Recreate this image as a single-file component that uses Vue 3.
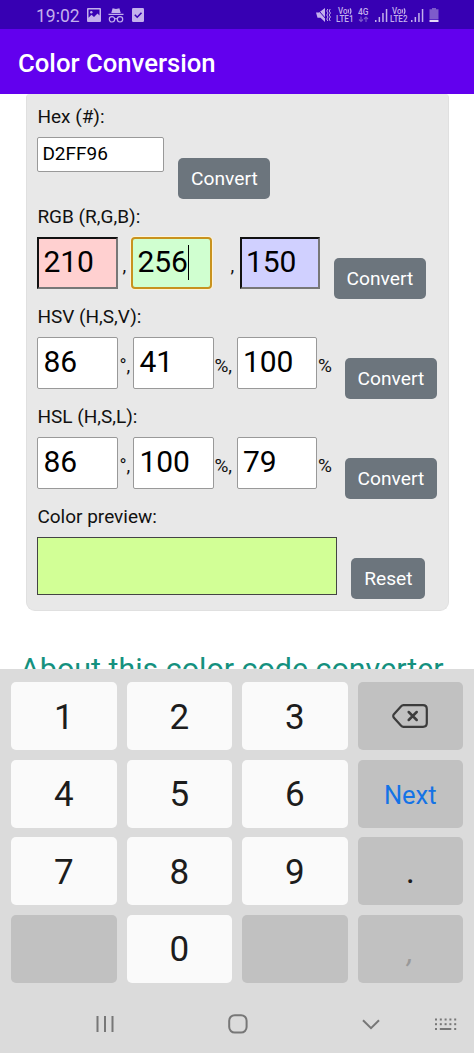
<script setup>
import { ref } from 'vue';

const hex = ref('D2FF96');

const rows = ref([
  {
    label: 'RGB (R,G,B):',
    type: 'rgb',
    fields: [
      { value: '210', after: ',', cls: 'red' },
      { value: '256', after: ',', cls: 'green', focused: true },
      { value: '150', after: '', cls: 'blue' }
    ]
  },
  {
    label: 'HSV (H,S,V):',
    type: 'hsv',
    fields: [
      { value: '86', after: '°,' },
      { value: '41', after: '%,' },
      { value: '100', after: '%', cls: 'last' }
    ]
  },
  {
    label: 'HSL (H,S,L):',
    type: 'hsl',
    fields: [
      { value: '86', after: '°,' },
      { value: '100', after: '%,' },
      { value: '79', after: '%', cls: 'last' }
    ]
  }
]);

const keys = [
  { text: '1' }, { text: '2' }, { text: '3' }, { text: '', cls: 'dark', icon: true },
  { text: '4' }, { text: '5' }, { text: '6' }, { text: 'Next', cls: 'dark next' },
  { text: '7' }, { text: '8' }, { text: '9' }, { text: '.', cls: 'dark' },
  { text: '', cls: 'dark' }, { text: '0' }, { text: '', cls: 'dark' }, { text: ',', cls: 'dark comma' }
];

const dots = [0, 4.8, 9.6, 14.4, 19.2];
</script>

<template>
  <div class="screen">
    <div class="status">
      <span class="clock">19:02</span>
      <svg class="picture" width="14" height="14" viewBox="0 0 14 14">
        <path fill-rule="evenodd" d="M1 0h12q1 0 1 1v12q0 1-1 1H1q-1 0-1-1V1q0-1 1-1zM1.5 1.5v8.300l3-3 2.500 2.300 3.500-3.600 2 2V1.500z" />
        <circle cx="4.300" cy="4.200" r="1.200" />
      </svg>
      <svg class="incognito" width="16" height="15" viewBox="0 0 16 15">
        <path d="M4.600 0.300L8 1l3.400-.7L12.700 5H3.300zM.5 5.700h15v1.400H.5z" />
        <g fill="none" stroke="#c3b0ec" stroke-width="1.200">
          <circle cx="4" cy="11.300" r="2.700" />
          <circle cx="12" cy="11.300" r="2.700" />
          <path d="M6.700 11q1.300-1 2.600 0" />
        </g>
      </svg>
      <svg class="task" width="12" height="14" viewBox="0 0 12 14">
        <rect width="12" height="14" rx="1.200" />
        <path d="M2.800 6.800l2.400 2.400 4.300-4.500" fill="none" stroke="#3700b3" stroke-width="1.600" />
      </svg>
      <div class="status-right">
        <svg class="mute" width="15" height="14" viewBox="0 0 15 14">
          <path d="M0 4.500h3L9 0v14L4.500 9.800H1.500z" />
          <path d="M.5 0L10 11" stroke="#3700b3" stroke-width="1" />
          <path d="M11.800 1l-1 2 1.200 2-1.200 2 1.200 2-1.200 2 1 2M14.200 1l-1 2 1.200 2-1.200 2 1.200 2-1.200 2 1 2" fill="none" stroke="#c3b0ec" stroke-width="1" />
        </svg>
        <svg class="volte" width="18" height="16" viewBox="0 0 18 16">
          <text x="2" y="7.300" textLength="9.500" lengthAdjust="spacingAndGlyphs">Vo</text>
          <path class="wave" d="M12 2.300q1.400 2 0 4M14 1.400q2 2.900 0 5.800" />
          <text x="0" y="15.300" textLength="17.500" lengthAdjust="spacingAndGlyphs">LTE1</text>
        </svg>
        <svg class="net" width="11" height="16" viewBox="0 0 11 16">
          <text x="0" y="7.700" textLength="10.500" lengthAdjust="spacingAndGlyphs">4G</text>
          <path class="arrows" d="M3 9.500v5M1 12.500l2 2 2-2M8 15v-5M6 12l2-2 2 2" />
        </svg>
        <svg class="signal" width="13" height="14" viewBox="0 0 13 14">
          <path d="M0 12h1.500v2H0zM3.600 9h1.500v5H3.600zM7.200 5h1.500v9H7.200zM10.800 1h1.500v13h-1.500z" />
        </svg>
        <svg class="volte second" width="18" height="16" viewBox="0 0 18 16">
          <text x="2" y="7.300" textLength="9.500" lengthAdjust="spacingAndGlyphs">Vo</text>
          <path class="wave" d="M12 2.300q1.400 2 0 4M14 1.400q2 2.900 0 5.800" />
          <text x="0" y="15.300" textLength="17.500" lengthAdjust="spacingAndGlyphs">LTE2</text>
        </svg>
        <svg class="signal" width="13" height="14" viewBox="0 0 13 14">
          <path d="M0 12h1.500v2H0zM3.600 9h1.500v5H3.600zM7.200 5h1.500v9H7.200zM10.800 1h1.500v13h-1.500z" />
        </svg>
        <svg class="battery" width="10" height="14" viewBox="0 0 10 14">
          <path d="M3 0h4v1.300h2.500V11H.5V1.300H3z" fill="#7d5bcb" />
          <path d="M.5 11.800h9V14h-9z" fill="#e4daf8" />
        </svg>
      </div>
    </div>

    <header class="toolbar">Color Conversion</header>

    <main class="content">
      <div class="panel">
        <div class="group">
          <label>Hex (#):</label>
          <div class="line">
            <div class="hex">{{ hex }}</div>
            <button class="btn">Convert</button>
          </div>
        </div>
        <div v-for="row in rows" :key="row.type" class="group" :class="row.type">
          <label>{{ row.label }}</label>
          <div class="line">
            <template v-for="(field, i) in row.fields" :key="i">
              <div class="field" :class="[field.cls, { focused: field.focused }]">
                {{ field.value }}<i v-if="field.focused" class="caret"></i>
              </div>
              <span class="after" :class="'after' + i">{{ field.after }}</span>
            </template>
            <button class="btn">Convert</button>
          </div>
        </div>
        <div class="group">
          <label>Color preview:</label>
          <div class="line">
            <div class="preview"></div>
            <button class="btn reset">Reset</button>
          </div>
        </div>
      </div>
      <h2>About this color code converter</h2>
    </main>

    <div class="keyboard">
      <div class="keys">
        <div v-for="(key, i) in keys" :key="i" class="key" :class="key.cls">
          <svg v-if="key.icon" width="36" height="24" viewBox="0 0 36 24" fill="none" stroke="#3c3c3c" stroke-width="2.200" stroke-linejoin="round" stroke-linecap="round">
            <path d="M11.500 1.200H31q3.800 0 3.800 3.800v14q0 3.800-3.800 3.800H11.500q-1.500 0-2.600-1.200l-7-7.800q-1.300-1.800 0-3.600l7-7.800q1.100-1.200 2.600-1.200z" />
            <path d="M16.700 8l8 8M24.700 8l-8 8" stroke-width="2.500" />
          </svg>
          <span v-else>{{ key.text }}</span>
        </div>
      </div>
      <div class="nav">
        <svg class="recents" width="18" height="18" viewBox="0 0 18 18">
          <path d="M1.500 1v16M9 1v16M16.500 1v16" />
        </svg>
        <svg class="home" width="20" height="20" viewBox="0 0 20 20">
          <rect x="1.200" y="1.200" width="17.400" height="17.400" rx="5.500" />
        </svg>
        <svg class="back" width="18" height="11" viewBox="0 0 18 11">
          <path d="M1 1.200l8 8 8-8" />
        </svg>
        <svg class="ime" width="22" height="13" viewBox="0 0 22 13">
          <g v-for="x in dots" :key="x">
            <rect :x="x" y="0.500" width="2" height="2" />
            <rect :x="x" y="5.200" width="2" height="2" />
          </g>
          <rect x="0" y="10" width="2" height="2" />
          <rect x="4.800" y="10" width="11.500" height="2" />
          <rect x="19.200" y="10" width="2" height="2" />
        </svg>
      </div>
    </div>
  </div>
</template>

<style>
body {
  background: #fff;
}
</style>

<style scoped>
.screen {
  width: 474px;
  height: 1053px;
  overflow: hidden;
  display: flex;
  flex-direction: column;
  font-family: Roboto, sans-serif;
  color: #111;
}

.status {
  height: 29px;
  flex: none;
  box-sizing: border-box;
  padding: 1px 35px 0 36px;
  display: flex;
  align-items: center;
  background: #3700b3;
  color: #c3b0ec;
  fill: #c3b0ec;
}

.clock {
  font-size: 17.5px;
  line-height: 28px;
  width: 51px;
  padding-top: 1px;
}

.incognito {
  margin-left: 7px;
}

.task {
  margin-left: 8px;
}

.status-right {
  margin-left: auto;
  display: flex;
  align-items: center;
}

.status-right text {
  font-size: 8.8px;
  font-weight: 500;
}

.volte {
  margin-left: 5px;
}

.volte.second {
  margin-left: 2px;
}

.wave,
.arrows {
  fill: none;
  stroke: #c3b0ec;
  stroke-width: 1.1;
}

.arrows {
  stroke: #7d5bcb;
}

.net {
  margin-left: 4px;
}

.signal {
  margin-left: 6px;
}

.second + .signal {
  margin-left: 3px;
}

.battery {
  margin-left: 5px;
}

.toolbar {
  height: 65px;
  flex: none;
  box-sizing: border-box;
  padding-left: 18px;
  background: #6200ee;
  color: #fff;
  font-size: 25.7px;
  font-weight: 500;
  line-height: 68px;
}

.content {
  height: 575px;
  flex: none;
  overflow: hidden;
  padding-left: 26px;
}

.panel {
  width: 423px;
  height: 517px;
  box-sizing: border-box;
  padding: 13px 0 0 10.400px;
  background: #e8e8e8;
  border: 1px solid #e0e0e0;
  border-top: 0;
  border-radius: 4px 4px 9px 9px;
}

.group {
  height: 100px;
}

label {
  display: block;
  height: 30px;
  font-size: 19px;
  line-height: 20px;
}

.line {
  display: flex;
  align-items: baseline;
  height: 60px;
}

.hex,
.field {
  box-sizing: border-box;
  flex: none;
  background: #fff;
  border: 1px solid #999;
  border-radius: 2px;
  color: #000;
}

.hex {
  width: 127px;
  height: 35px;
  padding-left: 4px;
  font-size: 19px;
  line-height: 32px;
}

.field {
  width: 81px;
  height: 52px;
  padding-left: 5px;
  font-size: 30px;
  line-height: 48px;
  white-space: nowrap;
}

.field.last,
.field.blue {
  width: 80px;
}

.rgb .field {
  border: 2px solid;
  border-color: #111 #777 #777 #111;
  border-radius: 0;
  padding-left: 4px;
  line-height: 46px;
}

.rgb .red {
  background: #ffd0d0;
}

.rgb .green {
  background: #d0ffd0;
}

.rgb .blue {
  background: #d0d0ff;
}

.rgb .focused {
  border-color: #c8921e;
  border-radius: 4px;
  box-shadow: 0 0 0 1px #fff3d8;
}

.caret {
  display: inline-block;
  width: 1px;
  height: 35px;
  background: #000;
  vertical-align: -8px;
}

.after {
  box-sizing: border-box;
  flex: none;
  font-size: 19px;
  white-space: nowrap;
}

.after0 {
  width: 15px;
  padding-left: 1px;
}

.after1 {
  width: 22.500px;
}

.after2 {
  width: 28px;
  padding-left: 1px;
}

.rgb .after0 {
  width: 13px;
  padding-left: 4px;
}

.rgb .after1 {
  width: 27.500px;
  padding-left: 18px;
}

.rgb .after2 {
  width: 14px;
}

.btn {
  flex: none;
  align-self: flex-start;
  width: 92px;
  height: 41px;
  margin: 21px 0 0;
  padding: 0;
  border: 0;
  border-radius: 5px;
  background: #6c757d;
  color: #fff;
  font-family: inherit;
  font-size: 19.2px;
  line-height: 40px;
}

.hex + .btn {
  margin-left: 14px;
}

.preview {
  box-sizing: border-box;
  align-self: flex-start;
  width: 300px;
  height: 58px;
  background: #d2ff96;
  border: 1px solid #444;
}

.reset {
  width: 74px;
  margin-left: 14px;
}

h2 {
  margin: 38px 0 0 -6px;
  font-size: 30.4px;
  font-weight: 400;
  line-height: 40px;
  color: #15917f;
  white-space: nowrap;
}

.keyboard {
  flex: 1;
  background: #dbdbdb;
  padding: 13px 11px 0;
}

.keys {
  display: grid;
  grid-template-columns: repeat(4, 105.5px);
  grid-auto-rows: 68.300px;
  gap: 9.300px 10px;
}

.key {
  box-sizing: border-box;
  display: flex;
  align-items: center;
  justify-content: center;
  border-radius: 5px;
  background: #fafafa;
  font-size: 35px;
  color: #1c1c1c;
  padding-top: 2px;
}

.key.dark {
  background: #c1c1c1;
  padding-top: 0;
}

.key.next {
  font-size: 25.5px;
  color: #1473e6;
  padding-top: 2px;
}

.key.comma {
  color: #999;
  font-size: 30px;
  font-style: italic;
  padding-top: 6px;
}

.nav {
  display: flex;
  align-items: center;
  height: 82px;
  padding-left: 85px;
  fill: none;
  stroke: #777;
  stroke-width: 2;
}

.home {
  margin-left: 114px;
}

.back {
  margin-left: 114px;
}

.ime {
  margin-left: 55px;
  fill: #777;
  stroke: none;
}
</style>
